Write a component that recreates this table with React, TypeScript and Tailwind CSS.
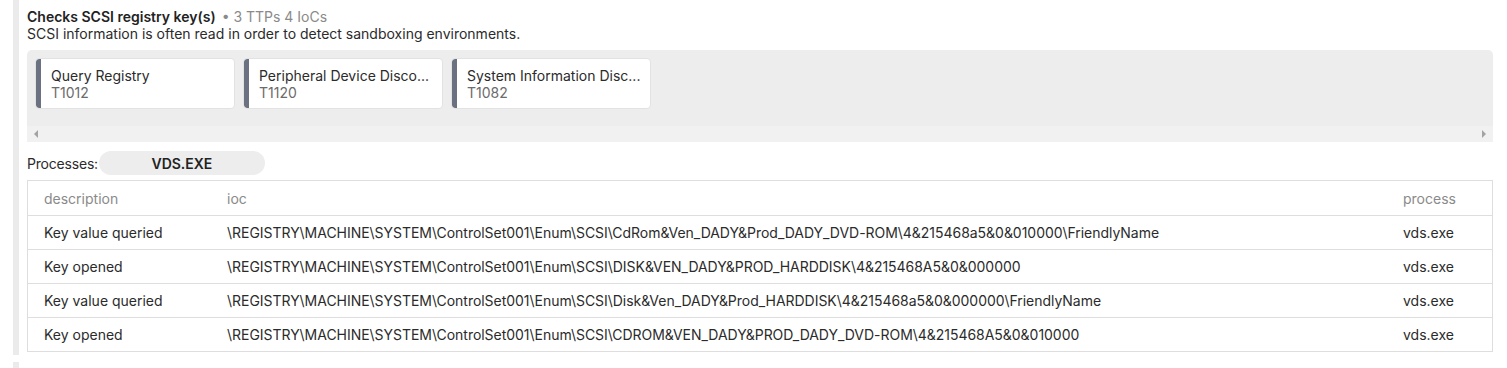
import React from 'react'

const ttps = [
  { name: 'Query Registry', id: 'T1012' },
  { name: 'Peripheral Device Disco...', id: 'T1120' },
  { name: 'System Information Disc...', id: 'T1082' },
]

const rows = [
  {
    description: 'Key value queried',
    ioc: '\\REGISTRY\\MACHINE\\SYSTEM\\ControlSet001\\Enum\\SCSI\\CdRom&Ven_DADY&Prod_DADY_DVD-ROM\\4&215468a5&0&010000\\FriendlyName',
    process: 'vds.exe',
  },
  {
    description: 'Key opened',
    ioc: '\\REGISTRY\\MACHINE\\SYSTEM\\ControlSet001\\Enum\\SCSI\\DISK&VEN_DADY&PROD_HARDDISK\\4&215468A5&0&000000',
    process: 'vds.exe',
  },
  {
    description: 'Key value queried',
    ioc: '\\REGISTRY\\MACHINE\\SYSTEM\\ControlSet001\\Enum\\SCSI\\Disk&Ven_DADY&Prod_HARDDISK\\4&215468a5&0&000000\\FriendlyName',
    process: 'vds.exe',
  },
  {
    description: 'Key opened',
    ioc: '\\REGISTRY\\MACHINE\\SYSTEM\\ControlSet001\\Enum\\SCSI\\CDROM&VEN_DADY&PROD_DADY_DVD-ROM\\4&215468A5&0&010000',
    process: 'vds.exe',
  },
]

function TtpCard({ name, id }: { name: string; id: string }) {
  return (
    <div className="w-[200px] h-[51px] shrink-0 flex bg-white border border-[#e2e2e2] rounded-[4px] overflow-hidden">
      <div className="w-[5px] bg-[#6c7181] rounded-l-[3px]" />
      <div className="pl-[10px] pt-[8px] leading-[17px]">
        <div className="text-[#2b2b2b] whitespace-nowrap">{name}</div>
        <div className="text-[#6b6b6b]">{id}</div>
      </div>
    </div>
  )
}

export default function App() {
  return (
    <div className="w-[1507px] h-[368px] bg-white pl-[13px] pr-[14px] text-[14px] overflow-hidden" style={{ fontFamily: 'Inter, "Noto Sans", sans-serif' }}>
      <div className="border-l-[6px] border-[#ebebeb] pl-[8px] pt-[8px] h-[355px]">
        <div className="leading-[17px]">
          <span className="font-semibold text-[#222]">Checks SCSI registry key(s)</span>
          <span className="text-[#8a8a8a] ml-[6px]">• 3 TTPs 4 IoCs</span>
        </div>
        <div className="leading-[17px] text-[#2b2b2b]">SCSI information is often read in order to detect sandboxing environments.</div>

        <div className="mt-[8px] bg-[#ededed] rounded-t-[5px]">
          <div className="flex gap-[8px] px-[8px] pt-[8px] pb-[17px]">
            {ttps.map((t) => (
              <TtpCard key={t.id} {...t} />
            ))}
          </div>
          <div className="h-[16px] bg-[#f1f1f1] flex items-center justify-between px-[6px]">
            <svg width="6" height="8" viewBox="0 0 6 8"><path d="M5 0 L1 4 L5 8 Z" fill="#a3a3a3" /></svg>
            <svg width="6" height="8" viewBox="0 0 6 8"><path d="M1 0 L5 4 L1 8 Z" fill="#a3a3a3" /></svg>
          </div>
        </div>

        <div className="flex items-center mt-[9px] h-[24px]">
          <span className="text-[#2b2b2b] tracking-[-0.2px]">Processes:</span>
          <span className="ml-[1px] w-[166px] h-[24px] rounded-full bg-[#ededed] flex items-center justify-center font-semibold text-[#222]">VDS.EXE</span>
        </div>

        <div className="mt-[5px] border border-[#dedede]">
          <div className="grid grid-cols-[183px_1fr_105px] h-[34px] items-center text-[#8a8a8a]">
            <div className="pl-[16px]">description</div>
            <div className="pl-[16px]">ioc</div>
            <div className="pl-[16px]">process</div>
          </div>
          {rows.map((r, i) => (
            <div key={i} className="grid grid-cols-[183px_1fr_105px] h-[34px] items-center border-t border-[#dedede] text-[#2b2b2b]">
              <div className="pl-[16px]">{r.description}</div>
              <div className="pl-[16px] whitespace-nowrap tracking-[-0.03px]">{r.ioc}</div>
              <div className="pl-[16px]">{r.process}</div>
            </div>
          ))}
        </div>
      </div>
      <div className="mt-[7px] border-l-[6px] border-[#ebebeb] h-[20px]" />
    </div>
  )
}
